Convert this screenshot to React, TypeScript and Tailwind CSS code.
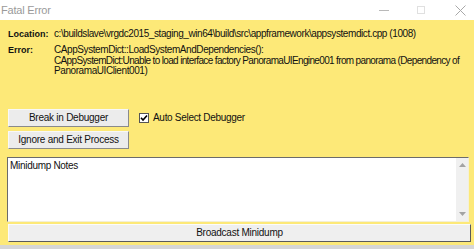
import React from "react";

const F = { fontFamily: '"Liberation Sans", Arial, sans-serif' };

export default function App() {
  return (
    <div
      className="w-[474px] h-[249px] overflow-hidden bg-[#d6d6d6] flex flex-col text-[#111]"
      style={F}
    >
      {/* Title bar */}
      <div className="h-[20px] bg-white flex items-center relative shrink-0">
        <span className="text-[11px] text-[#9a9a9a] tracking-[-0.2px] ml-[1px] leading-none">
          Fatal Error
        </span>
        <div className="absolute right-0 top-0 h-[20px] flex items-center">
          <div className="w-[10px] h-[1px] bg-[#b9b9b9] mr-[28px]" />
          <div className="w-[8px] h-[8px] border border-[#e0e0e0] mr-[30px]" />
          <svg width="11" height="11" viewBox="0 0 11 11" className="mr-[8px]">
            <path d="M0.5 0.5 L10.5 10.5 M10.5 0.5 L0.5 10.5" stroke="#a8a8a8" strokeWidth="1" />
          </svg>
        </div>
      </div>

      {/* Yellow body */}
      <div className="h-[225px] bg-[#fde978] flex flex-col shrink-0">
        <div className="pt-[9px] pl-[8px] grid grid-cols-[46px_1fr] gap-y-[5.5px] text-[10px] leading-[10.5px] tracking-[-0.42px] whitespace-nowrap">
          <div className="font-bold text-[9px] tracking-[0px]">Location:</div>
          <div>c:\buildslave\vrgdc2015_staging_win64\build\src\appframework\appsystemdict.cpp (1008)</div>
          <div className="font-bold text-[9px] tracking-[0px]">Error:</div>
          <div>
            <div>CAppSystemDict::LoadSystemAndDependencies():</div>
            <div className="tracking-[-0.65px]">CAppSystemDict:Unable to load interface factory PanoramaUIEngine001 from panorama (Dependency of</div>
            <div>PanoramaUIClient001)</div>
          </div>
        </div>

        {/* Buttons */}
        <div className="mt-[32px] ml-[8px] flex items-start">
          <div className="flex flex-col gap-[4px]">
            <button className="w-[121px] h-[18px] bg-[#ececec] border border-t-[#f8f8f8] border-l-[#f8f8f8] border-b-[#8a8a8a] border-r-[#8a8a8a] text-[10px] tracking-[-0.25px] leading-none">
              Break in Debugger
            </button>
            <button className="w-[121px] h-[18px] bg-[#ececec] border border-t-[#f8f8f8] border-l-[#f8f8f8] border-b-[#8a8a8a] border-r-[#8a8a8a] text-[10px] tracking-[-0.25px] leading-none">
              Ignore and Exit Process
            </button>
          </div>
          <div className="ml-[10px] mt-[4px] flex items-center">
            <div className="w-[10px] h-[10px] bg-white border border-[#555] flex items-center justify-center">
              <svg width="8" height="8" viewBox="0 0 8 8">
                <path d="M1 3.8 L3 6 L7 1.5" fill="none" stroke="#000" strokeWidth="1.6" />
              </svg>
            </div>
            <span className="ml-[4px] text-[10px] tracking-[-0.3px] leading-none">Auto Select Debugger</span>
          </div>
        </div>

        {/* Notes textarea */}
        <div className="mt-[8px] ml-[7px] w-[462px] h-[65px] bg-white border-t border-l border-t-[#6b6b6b] border-l-[#6b6b6b] border-b border-r border-b-[#f4f0d8] border-r-[#f4f0d8] flex">
          <div className="flex-1 pl-[2px] pt-[2px] text-[10px] tracking-[-0.3px] leading-[12px]">
            Minidump Notes
          </div>
          <div className="w-[12px] bg-[#f0f0f0] flex flex-col items-center justify-between py-[5px]">
            <svg width="7" height="4" viewBox="0 0 7 4">
              <path d="M0 4 L3.5 0 L7 4 Z" fill="#a3a3a3" />
            </svg>
            <svg width="7" height="4" viewBox="0 0 7 4">
              <path d="M0 0 L3.5 4 L7 0 Z" fill="#a3a3a3" />
            </svg>
          </div>
        </div>

        {/* Broadcast */}
        <button className="mt-[2px] ml-[8px] w-[463px] h-[18px] bg-[#efefef] border border-t-[#fbfbfb] border-l-[#fbfbfb] border-b-[#5a5a5a] border-r-[#5a5a5a] text-[10px] tracking-[-0.25px] leading-none">
          Broadcast Minidump
        </button>
      </div>
    </div>
  );
}
